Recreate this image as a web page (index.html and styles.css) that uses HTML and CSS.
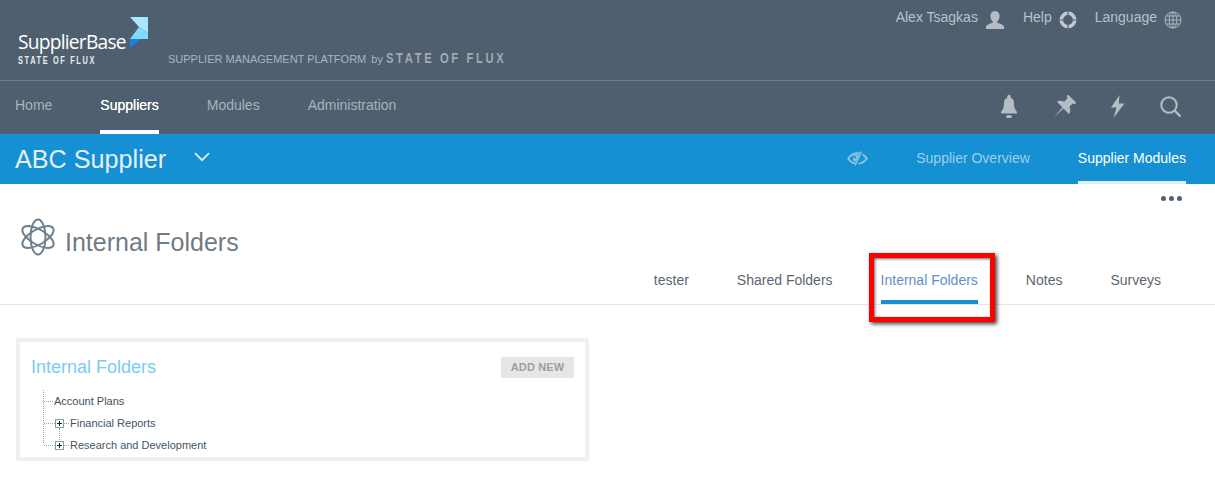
FILE: index.html
```html
<!DOCTYPE html>
<html lang="en">
<head>
<meta charset="utf-8">
<title>Internal Folders</title>
<link rel="stylesheet" href="styles.css">
</head>
<body>
<header class="top">
  <div class="brand-row">
    <div class="logo">
      <div class="logo-name">SupplierBase</div>
      <div class="logo-sub">STATE OF FLUX</div>
      <svg class="logo-mark" width="18" height="31" viewBox="0 0 18 31">
        <polygon points="0,0 18,0 18,16 9,10" fill="#a9e6ff"/>
        <polygon points="18,16 18,22 0,22 9,10" fill="#7fdcfb"/>
        <polygon points="0,22 11,22 0,31" fill="#1f7fe8"/>
      </svg>
    </div>
    <div class="tagline">SUPPLIER MANAGEMENT PLATFORM <span class="by">by</span> <span class="flux">STATE OF FLUX</span></div>
    <div class="user-links">
      <a class="user-link">Alex Tsagkas
        <svg width="20" height="18" viewBox="0 0 20 18"><path d="M10 0c3 0 4.600 2.200 4.600 5 0 2.400-1 4.300-2.300 5.300v1.400c2.700.8 6.200 1.600 6.700 4.300v2H1v-2c.5-2.700 4-3.500 6.700-4.300v-1.400C6.400 9.300 5.400 7.400 5.400 5c0-2.800 1.600-5 4.600-5z" fill="#b4bcc5"/></svg>
      </a>
      <a class="user-link">Help
        <svg width="18" height="18" viewBox="0 0 18 18"><circle cx="9" cy="9" r="6.700" fill="none" stroke="#c3c9d0" stroke-width="3.500"/><g stroke="#4f5f70" stroke-width="1.200"><path d="M9 .5v4M9 13.500v4M.5 9h4M13.500 9h4"/></g></svg>
      </a>
      <a class="user-link">Language
        <svg width="18" height="18" viewBox="0 0 18 18" fill="none" stroke="#aeb6bf" stroke-width="1"><circle cx="9" cy="9" r="8"/><ellipse cx="9" cy="9" rx="3.800" ry="8"/><path d="M9 1v16M1 9h16M2.200 5h13.600M2.200 13h13.600"/></svg>
      </a>
    </div>
  </div>
  <nav class="main-nav">
    <ul class="nav-list">
      <li class="nav-item">Home</li>
      <li class="nav-item is-current">Suppliers</li>
      <li class="nav-item">Modules</li>
      <li class="nav-item">Administration</li>
    </ul>
    <div class="nav-icons">
      <svg width="18" height="25" viewBox="0 0 18 25"><circle cx="9" cy="2.500" r="1.700" fill="#b4bcc5"/><path d="M9 3.500c3.500 0 5 2.500 5 6 0 4 1 6 3 8.500v1.500H1V18c2-2.500 3-4.500 3-8.500 0-3.500 1.500-6 5-6z" fill="#b4bcc5"/><ellipse cx="9" cy="22.500" rx="3" ry="1.500" fill="#b4bcc5"/></svg>
      <svg width="23" height="23" viewBox="0 0 22 22"><g transform="rotate(45 11 11)" fill="#b4bcc5"><path d="M5.500 .5h11v2l-2 1v4.500c2.500 1 4.500 2.500 4.500 5H3c0-2.500 2-4 4.500-5V3.500l-2-1z"/><path d="M10.200 13h1.600l-.8 12z"/></g></svg>
      <svg width="14" height="23" viewBox="0 0 14 23"><path d="M8.500 0L0 12.500h5.500L2.500 23 13.500 8.500H7.800L8.500 0z" fill="#b4bcc5"/></svg>
      <svg width="22" height="22" viewBox="0 0 22 22" fill="none" stroke="#b4bcc5" stroke-width="2"><circle cx="9" cy="9" r="7.700"/><path d="M14.500 14.500l6 6" stroke-width="2.400"/></svg>
    </div>
  </nav>
</header>

<section class="supplier-bar">
  <div class="supplier-name">
    <h1 class="supplier-title">ABC Supplier</h1>
    <svg class="chevron" width="16" height="10" viewBox="0 0 16 10" fill="none" stroke="#e3eef6" stroke-width="1.800"><path d="M1 1.200l7 7 7-7"/></svg>
  </div>
  <div class="supplier-tabs">
    <svg class="eye" width="21" height="15" viewBox="0 0 21 15"><path d="M1.200 7.500C3.500 4 6.800 2.300 10.500 2.300S17.500 4 19.800 7.500C17.500 11 14.200 12.700 10.500 12.700S3.500 11 1.200 7.500z" fill="none" stroke="#8cc4e6" stroke-width="2"/><circle cx="9.500" cy="7.200" r="3.600" fill="#8cc4e6"/><circle cx="7.800" cy="6.300" r="1.200" fill="#1590d2"/><path d="M15.500 -.5L8.500 15.500" stroke="#1590d2" stroke-width="3.200"/><path d="M14.500 .5L8 14.500" stroke="#8cc4e6" stroke-width="1.500"/></svg>
    <a class="bar-tab">Supplier Overview</a>
    <a class="bar-tab is-current">Supplier Modules</a>
  </div>
</section>

<section class="module">
  <div class="more"><span class="dot"></span><span class="dot"></span><span class="dot"></span></div>
  <div class="module-head">
    <svg class="atom" width="36" height="38" viewBox="0 0 36 38" fill="none" stroke="#6d7f8c" stroke-width="2">
      <ellipse cx="18" cy="19" rx="7.500" ry="17.500"/>
      <ellipse cx="18" cy="19" rx="7.500" ry="17.500" transform="rotate(60 18 19)"/>
      <ellipse cx="18" cy="19" rx="7.500" ry="17.500" transform="rotate(120 18 19)"/>
    </svg>
    <h2 class="module-title">Internal Folders</h2>
  </div>
  <div class="tabs">
    <a class="tab">tester</a>
    <a class="tab">Shared Folders</a>
    <a class="tab is-active">Internal Folders</a>
    <a class="tab">Notes</a>
    <a class="tab">Surveys</a>
    <div class="callout"></div>
  </div>
</section>

<section class="panel">
  <div class="panel-head">
    <h3 class="panel-title">Internal Folders</h3>
    <button class="add-new" type="button">ADD NEW</button>
  </div>
  <ul class="tree">
    <li class="tree-row tree-leaf"><span class="tree-dash"></span>Account Plans</li>
    <li class="tree-row"><span class="tree-dash short"></span><span class="expander has-next"></span><span class="tree-dash tiny"></span><a class="tree-link">Financial Reports</a></li>
    <li class="tree-row"><span class="tree-dash short"></span><span class="expander"></span><span class="tree-dash tiny"></span><a class="tree-link">Research and Development</a></li>
  </ul>
</section>
</body>
</html>
```
FILE: styles.css
```css
* { box-sizing: border-box; }
html, body { margin: 0; padding: 0; }
body {
  width: 1215px;
  height: 489px;
  overflow: hidden;
  background: #fff;
  font-family: "Liberation Sans", Arial, sans-serif;
  color: #5c6670;
}
h1, h2, h3 { margin: 0; font-weight: normal; }
ul { list-style: none; margin: 0; padding: 0; }

.top { background: #4f5f70; height: 134px; }
.brand-row {
  position: relative;
  height: 81px;
  border-bottom: 1px solid #6f7d8b;
  display: flex;
  align-items: flex-start;
}
.logo { position: relative; width: 168px; height: 80px; padding: 30px 0 0 18px; }
.logo-name { font-family: "Open Sans", sans-serif; font-size: 19.200px; line-height: 24px; color: #fff; letter-spacing: -0.770px; }
.logo-sub {
  width: 110px;
  font-size: 10px;
  font-weight: bold;
  letter-spacing: 2.200px;
  line-height: 11px;
  margin-top: 1px;
  color: #e8ebee;
  transform: scaleX(.74);
  transform-origin: left center;
  white-space: nowrap;
}
.logo-mark { position: absolute; left: 130px; top: 17px; }
.tagline { margin-top: 51px; font-size: 11px; line-height: 16px; color: #a9b4bf; white-space: nowrap; }
.by { color: #a9b4bf; margin-left: 2px; }
.flux {
  display: inline-block;
  font-size: 14px;
  font-weight: bold;
  letter-spacing: 3.300px;
  color: #a2a9b1;
  transform: scaleX(.8);
  transform-origin: left center;
  margin-top: -2px;
}
.user-links {
  position: absolute;
  top: 0;
  right: 0;
  padding: 7px 33px 0 0;
  display: flex;
  gap: 18px;
}
.user-link { display: flex; align-items: center; gap: 7px; font-size: 14px; line-height: 20px; color: #b9c1ca; height: 20px; }
.user-link svg { margin-top: 5px; }

.main-nav { display: flex; justify-content: space-between; height: 53px; }
.nav-list { display: flex; gap: 48px; padding-left: 15px; }
.nav-item {
  font-size: 14px;
  line-height: 48px;
  height: 53px;
  color: #a9b2bb;
  border-bottom: 4px solid transparent;
}
.nav-item.is-current { color: #fff; border-bottom-color: #fff; text-shadow: 0 0 .4px #fff; }
.nav-icons { display: flex; align-items: center; gap: 35px; padding: 0 33px 2px 0; }

.supplier-bar {
  height: 50px;
  background: #1590d2;
  display: flex;
  justify-content: space-between;
  padding: 0 29px 0 15px;
}
.supplier-name { display: flex; align-items: center; gap: 28px; }
.supplier-title { font-size: 25.200px; line-height: 50px; color: #e6eff6; }
.chevron { margin-top: -4px; }
.supplier-tabs { display: flex; align-items: flex-start; gap: 48px; }
.eye { margin-top: 17px; }
.bar-tab {
  display: block;
  font-size: 14px;
  line-height: 48px;
  height: 50px;
  color: #9fcfeb;
  border-bottom: 3px solid transparent;
}
.bar-tab.is-current { color: #fff; border-bottom-color: #e4ebf1; }

.module { position: relative; height: 121px; border-bottom: 1px solid #e6e6e6; }
.more { position: absolute; top: 12px; right: 33px; display: flex; gap: 3px; }
.dot { width: 5px; height: 5px; border-radius: 50%; background: #4f5f70; }
.module-head { display: flex; align-items: flex-start; padding: 34px 0 0 20px; gap: 9px; }
.module-title { font-size: 25px; line-height: 30px; color: #6f7b85; margin-top: 9px; }
.tabs {
  position: absolute;
  right: 54px;
  bottom: 0;
  display: flex;
  gap: 48px;
  height: 52px;
}
.tab {
  display: block;
  font-size: 14px;
  line-height: 20px;
  padding-top: 18px;
  height: 52px;
  color: #5c6670;
  border-bottom: 4px solid transparent;
}
.tab.is-active { color: #5f8fc9; border-bottom-color: #1590d2; }
.callout {
  position: absolute;
  left: 215px;
  top: 1px;
  width: 126px;
  height: 69px;
  border: 5px solid #f00;
  box-shadow: 2px 2px 4px rgba(0, 0, 0, .75), inset 1px 1px 3px rgba(0, 0, 0, .6);
}

.panel {
  margin: 33px 0 0 16px;
  width: 573px;
  height: 123px;
  border: 4px solid #f0f0f0;
}
.panel-head { display: flex; justify-content: space-between; align-items: flex-start; padding: 11px 11px 0 11px; }
.panel-title { font-size: 18px; line-height: 28px; color: #7ccbee; }
.add-new {
  width: 73px;
  height: 21px;
  margin-top: 4px;
  border: 0;
  padding: 0;
  background: #e6e6e6;
  color: #9a9fa5;
  font: bold 11px/21px "Liberation Sans", Arial, sans-serif;
  letter-spacing: .15px;
}
.tree { margin: 11px 0 0 23px; border-left: 1px dotted #8aa; height: 53px; }
.tree-row {
  display: flex;
  align-items: center;
  height: 22px;
  font-size: 11px;
  color: #44505c;
  white-space: nowrap;
}
.tree-leaf { margin-top: -2px; }
.tree-dash { display: inline-block; width: 9px; border-top: 1px dotted #8aa; margin-right: 1px; }
.tree-dash.short { width: 11px; margin-right: 0; }
.tree-dash.tiny { width: 5px; margin-right: 1px; }
.expander {
  position: relative;
  width: 9px;
  height: 9px;
  border: 1px solid #7da3a3;
  background:
    linear-gradient(#222, #222) center / 5px 1px no-repeat,
    linear-gradient(#222, #222) center / 1px 5px no-repeat,
    #fff;
}
.expander.has-next::after {
  content: "";
  position: absolute;
  left: 3px;
  top: 8px;
  height: 14px;
  border-left: 1px dotted #8aa;
}
.tree-link { color: #3f5568; }
```
